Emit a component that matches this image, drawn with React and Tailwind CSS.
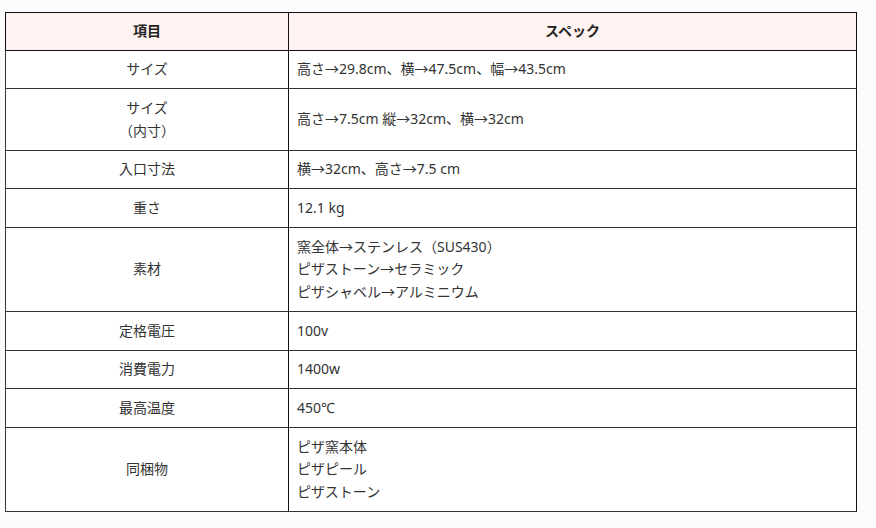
const ROWS = [
  { label: ['サイズ'], spec: ['高さ→29.8cm、横→47.5cm、幅→43.5cm'] },
  { label: ['サイズ', '（内寸）'], spec: ['高さ→7.5cm 縦→32cm、横→32cm'] },
  { label: ['入口寸法'], spec: ['横→32cm、高さ→7.5 cm'] },
  { label: ['重さ'], spec: ['12.1 kg'] },
  { label: ['素材'], spec: ['窯全体→ステンレス（SUS430）', 'ピザストーン→セラミック', 'ピザシャベル→アルミニウム'] },
  { label: ['定格電圧'], spec: ['100v'] },
  { label: ['消費電力'], spec: ['1400w'] },
  { label: ['最高温度'], spec: ['450℃'] },
  { label: ['同梱物'], spec: ['ピザ窯本体', 'ピザピール', 'ピザストーン'] },
];

export default function App() {
  return (
    <div
      className="w-[876px] h-[528px] bg-[#fcfcfc] pt-3 pl-[5px] text-[14px] text-[#333]"
      style={{ fontFamily: '"Noto Sans", "Noto Sans CJK JP", sans-serif' }}
    >
      <table className="w-[852px] border-collapse bg-white border border-[#111] leading-[22.67px]">
        <thead>
          <tr className="bg-[#fff3f1]">
            <th className="w-[283px] border border-[#111] py-[7px] font-bold text-[#222]">項目</th>
            <th className="border border-[#111] py-[7px] font-bold text-[#222]">スペック</th>
          </tr>
        </thead>
        <tbody>
          {ROWS.map((r, i) => (
            <tr key={i}>
              <td className="border border-[#333] border-r-[#111] py-[7.5px] text-center align-middle">
                {r.label.map((l, j) => <div key={j}>{l}</div>)}
              </td>
              <td className="border border-[#333] border-r-[#111] py-[7.5px] pl-2 align-middle">
                {r.spec.map((s, j) => <div key={j}>{s}</div>)}
              </td>
            </tr>
          ))}
        </tbody>
      </table>
    </div>
  );
}
